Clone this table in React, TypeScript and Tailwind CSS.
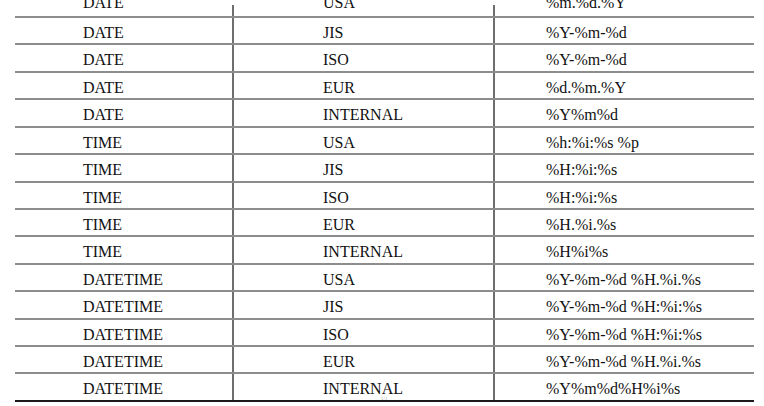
import React from "react";

const rows: [string, string, string][] = [
  ["DATE", "USA", "%m.%d.%Y"],
  ["DATE", "JIS", "%Y-%m-%d"],
  ["DATE", "ISO", "%Y-%m-%d"],
  ["DATE", "EUR", "%d.%m.%Y"],
  ["DATE", "INTERNAL", "%Y%m%d"],
  ["TIME", "USA", "%h:%i:%s %p"],
  ["TIME", "JIS", "%H:%i:%s"],
  ["TIME", "ISO", "%H:%i:%s"],
  ["TIME", "EUR", "%H.%i.%s"],
  ["TIME", "INTERNAL", "%H%i%s"],
  ["DATETIME", "USA", "%Y-%m-%d %H.%i.%s"],
  ["DATETIME", "JIS", "%Y-%m-%d %H:%i:%s"],
  ["DATETIME", "ISO", "%Y-%m-%d %H:%i:%s"],
  ["DATETIME", "EUR", "%Y-%m-%d %H.%i.%s"],
  ["DATETIME", "INTERNAL", "%Y%m%d%H%i%s"],
];

// total row heights (content + 2px bottom line)
const heights = [28, 27, 28, 27, 28, 27, 28, 27, 27, 28, 27, 28, 27, 27, 28];

export default function App() {
  return (
    <div
      className="relative w-[764px] h-[406px] overflow-hidden bg-white text-[#111111]"
      style={{ fontFamily: '"Liberation Serif", "Times New Roman", serif' }}
    >
      <div className="ml-[15px] mt-[-10px] w-[739px] flex flex-col">
        {rows.map((r, i) => {
          const last = i === rows.length - 1;
          const first = i === 0;
          const cell = first
            ? "flex items-center pt-0 text-[16px] leading-none"
            : "flex items-center pt-[4px] text-[16px] leading-none";
          return (
            <div
              key={i}
              className={
                "flex box-border " +
                (last ? "border-b-2 border-[#1a1a1a]" : "border-b-2 border-[#8d8d8d]")
              }
              style={{ height: heights[i] }}
            >
              <div className={"w-[217px] pl-[68px] " + cell}>{r[0]}</div>
              <div className={"w-[2px] bg-[#6e6e6e] " + (first ? "mt-[15px]" : "")} />
              <div className={"w-[259px] pl-[89px] " + cell}>{r[1]}</div>
              <div className={"w-[2px] bg-[#6e6e6e] " + (first ? "mt-[15px]" : "")} />
              <div className={"w-[259px] pl-[51px] " + cell}>{r[2]}</div>
            </div>
          );
        })}
      </div>
      <div className="absolute left-[381px] top-[396px] text-[5px] leading-none text-[#b0b0b0]">
        1/1
      </div>
    </div>
  );
}
